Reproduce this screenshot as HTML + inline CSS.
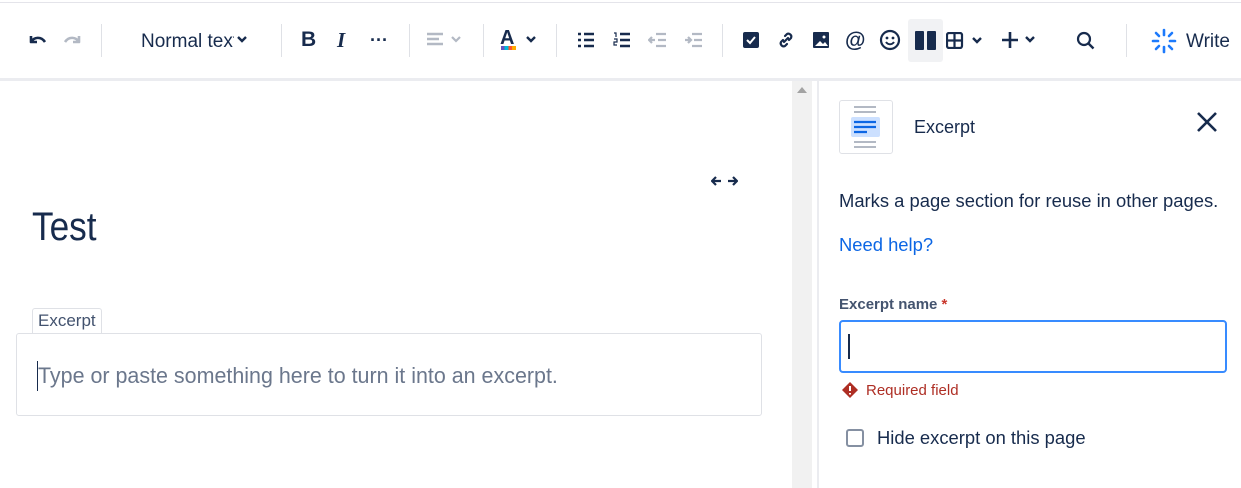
<!DOCTYPE html>
<html><head><meta charset="utf-8"><style>
*{box-sizing:border-box;margin:0;padding:0}
body{width:1241px;height:488px;overflow:hidden;background:#fff;font-family:"Liberation Sans",sans-serif;color:#172b4d;position:relative}
.a{position:absolute}
.sep{position:absolute;top:24px;width:1px;height:33px;background:#dfe1e6}
svg{position:absolute}
</style></head><body>
<div class="a" style="left:0;top:2px;width:1241px;height:1px;background:#e4e4ea"></div>
<div class="a" style="left:0;top:78px;width:1241px;height:3px;background:#ebecf0"></div>

<svg style="left:26px;top:30px" width="24" height="22" viewBox="0 0 24 22"><path d="M5 6v6h6M5 12c3-5 10-6 14 0" fill="none" stroke="#172b4d" stroke-width="2.6" stroke-linejoin="round"/></svg>
<svg style="left:60px;top:30px" width="24" height="22" viewBox="0 0 24 22"><path d="M19 6v6h-6M19 12c-3-5-10-6-14 0" fill="none" stroke="#b3b9c4" stroke-width="2.6" stroke-linejoin="round"/></svg>
<div class="sep" style="left:101px"></div>
<div class="a" style="left:141px;top:31px;font-size:19px;width:93px;overflow:hidden;white-space:nowrap">Normal text</div>
<svg style="left:236px;top:35px" width="12" height="10"><path d="M2 2l4 4 4-4" fill="none" stroke="#172b4d" stroke-width="2.4"/></svg>
<div class="sep" style="left:281px"></div>
<div class="a" style="left:301px;top:28px;font-size:21px;font-weight:bold">B</div>
<div class="a" style="left:337px;top:28px;font-size:21px;font-style:italic;font-family:'Liberation Serif';font-weight:bold">I</div>
<div class="a" style="left:370px;top:30px;font-size:18px;font-weight:bold">···</div>
<div class="sep" style="left:409px"></div>
<svg style="left:426px;top:32px" width="40" height="16"><path d="M1 2h16M1 7h12M1 12h16" stroke="#b3b9c4" stroke-width="2.4"/><path d="M26 5l4 4 4-4" fill="none" stroke="#b3b9c4" stroke-width="2.2"/></svg>
<div class="sep" style="left:483px"></div>
<div class="a" style="left:500px;top:27px;font-size:20px;font-weight:bold">A</div>
<div class="a" style="left:501px;top:46px;width:15px;height:4px;background:linear-gradient(90deg,#6554c0 0 25%,#00b8d9 25% 50%,#ff5630 50% 75%,#ffab00 75%)"></div>
<svg style="left:525px;top:35px" width="12" height="10"><path d="M2 2l4 4 4-4" fill="none" stroke="#172b4d" stroke-width="2.4"/></svg>
<div class="sep" style="left:556px"></div>
<svg style="left:577px;top:32px" width="18" height="16"><path d="M1 2h3M1 8h3M1 14h3M7 2h10M7 8h10M7 14h10" stroke="#172b4d" stroke-width="2.4"/></svg>
<svg style="left:613px;top:32px" width="18" height="16"><path d="M7 2h10M7 8h10M7 14h10" stroke="#172b4d" stroke-width="2.4"/><path d="M1 1h2v4M1 7h3v3H1v3h3" fill="none" stroke="#172b4d" stroke-width="1.2"/></svg>
<svg style="left:648px;top:32px" width="20" height="16"><path d="M8 2h10M10 8h8M8 14h10M1 8h6M4 5L1 8l3 3" fill="none" stroke="#b3b9c4" stroke-width="2.2"/></svg>
<svg style="left:684px;top:32px" width="20" height="16"><path d="M8 2h10M10 8h8M8 14h10M1 8h6M4 5l3 3-3 3" fill="none" stroke="#b3b9c4" stroke-width="2.2"/></svg>
<div class="sep" style="left:722px"></div>
<svg style="left:742px;top:31px" width="18" height="18"><rect x="1" y="1" width="16" height="16" rx="2" fill="#172b4d"/><path d="M5 9l3 3 5-6" fill="none" stroke="#fff" stroke-width="2"/></svg>
<svg style="left:776px;top:30px" width="20" height="20"><path d="M8 12l4-4M9 6l2-2a3 3 0 014 4l-2 2M11 14l-2 2a3 3 0 01-4-4l2-2" fill="none" stroke="#172b4d" stroke-width="2.2" stroke-linecap="round"/></svg>
<svg style="left:812px;top:31px" width="18" height="18"><rect x="1" y="1" width="16" height="16" rx="1" fill="#172b4d"/><path d="M3 15l5-5 3 3 2-2 3 4z" fill="#fff"/><circle cx="12" cy="6" r="1.5" fill="#fff"/></svg>
<div class="a" style="left:845px;top:29px;font-size:21px;font-weight:bold">@</div>
<svg style="left:879px;top:29px" width="22" height="22"><circle cx="11" cy="11" r="9" fill="none" stroke="#172b4d" stroke-width="2.2"/><circle cx="8" cy="9" r="1.4" fill="#172b4d"/><circle cx="14" cy="9" r="1.4" fill="#172b4d"/><path d="M7 13c2 3 6 3 8 0" fill="none" stroke="#172b4d" stroke-width="2"/></svg>
<div class="a" style="left:908px;top:19px;width:35px;height:43px;background:#f1f2f4;border-radius:3px"></div>
<svg style="left:915px;top:31px" width="22" height="19"><rect x="0" y="0" width="9" height="19" rx="1" fill="#172b4d"/><rect x="12" y="0" width="9" height="19" rx="1" fill="#172b4d"/></svg>
<svg style="left:946px;top:32px" width="40" height="17"><rect x="1" y="1" width="15" height="15" rx="2" fill="none" stroke="#172b4d" stroke-width="2.2"/><path d="M8.5 1v15M1 8.5h15" stroke="#172b4d" stroke-width="2.2"/><path d="M27 6l4 4 4-4" fill="none" stroke="#172b4d" stroke-width="2.4"/></svg>
<svg style="left:1001px;top:31px" width="40" height="18"><path d="M9 1v16M1 9h16" stroke="#172b4d" stroke-width="2.6"/><path d="M25 6l4 4 4-4" fill="none" stroke="#172b4d" stroke-width="2.4"/></svg>
<svg style="left:1076px;top:31px" width="20" height="20"><circle cx="8" cy="8" r="6" fill="none" stroke="#172b4d" stroke-width="2.2"/><path d="M12.5 12.5l5 5" stroke="#172b4d" stroke-width="2.4"/></svg>
<div class="sep" style="left:1126px"></div>
<svg style="left:1151px;top:28px" width="26" height="26" viewBox="0 0 26 26"><g stroke="#1d7afc" stroke-width="2.6" stroke-linecap="round"><path d="M13 2v5M13 19v5M2 13h5M19 13h5M5 5l3 3M18 18l3 3M21 5l-3 3M8 18l-3 3"/></g></svg>
<div class="a" style="left:1186px;top:31px;font-size:19px">Write</div>

<div class="a" style="left:792px;top:81px;width:20px;height:407px;background:#f1f1f1"></div>
<svg style="left:797px;top:87px" width="10" height="6"><path d="M0 6L5 0l5 6z" fill="#a3a3a3"/></svg>
<div class="a" style="left:817px;top:81px;width:2px;height:407px;background:#ebecf0"></div>
<svg style="left:711px;top:175px" width="27" height="12"><path d="M1 6h9M5 2L1 6l4 4M26 6h-9M22 2l4 4-4 4" fill="none" stroke="#172b4d" stroke-width="2.2"/></svg>
<div class="a" style="left:32px;top:205px;font-size:40px;transform:scaleX(.88);transform-origin:left">Test</div>
<div class="a" style="left:32px;top:308px;height:26px;border:1px solid #dfe1e6;border-bottom:none;border-radius:3px 3px 0 0;padding:2px 5px;font-size:17px;color:#42526e;background:#fff">Excerpt</div>
<div class="a" style="left:16px;top:333px;width:746px;height:83px;border:1px solid #dfe1e6;border-radius:3px"></div>
<div class="a" style="left:37px;top:361px;width:1px;height:30px;background:#172b4d"></div>
<div class="a" style="left:38px;top:363px;font-size:22px;color:#6b778c;transform:scaleX(.975);transform-origin:left;white-space:nowrap">Type or paste something here to turn it into an excerpt.</div>

<div class="a" style="left:839px;top:100px;width:54px;height:54px;border:1px solid #dfe1e6;border-radius:3px"></div>
<svg style="left:839px;top:100px" width="54" height="54"><path d="M15 7h22M15 12h22M15 42h22M15 47h22" stroke="#b3b9c4" stroke-width="2"/><rect x="12" y="17" width="29" height="20" rx="2" fill="#cce0ff"/><path d="M15 22h22M15 27h22M15 32h13" stroke="#0c66e4" stroke-width="2.2"/></svg>
<div class="a" style="left:914px;top:117px;font-size:18px">Excerpt</div>
<svg style="left:1196px;top:111px" width="22" height="22"><path d="M2 2l18 18M20 2L2 20" stroke="#172b4d" stroke-width="2.6"/></svg>
<div class="a" style="left:839px;top:190px;font-size:18.4px;white-space:nowrap">Marks a page section for reuse in other pages.</div>
<div class="a" style="left:839px;top:234px;font-size:18.4px;color:#0c66e4">Need help?</div>
<div class="a" style="left:839px;top:296px;font-size:15px;font-weight:bold;color:#44546f">Excerpt name <span style="color:#c9372c">*</span></div>
<div class="a" style="left:839px;top:320px;width:388px;height:53px;border:2px solid #388bff;border-radius:4px"></div>
<div class="a" style="left:848px;top:334px;width:1.5px;height:25px;background:#172b4d"></div>
<svg style="left:842px;top:382px" width="16" height="16"><path d="M8 0l8 8-8 8-8-8z" fill="#ae2e24"/><path d="M8 4v5M8 11v1.5" stroke="#fff" stroke-width="2"/></svg>
<div class="a" style="left:866px;top:382px;font-size:15px;color:#ae2e24">Required field</div>
<div class="a" style="left:846px;top:429px;width:18px;height:18px;border:2px solid #8590a2;border-radius:3px"></div>
<div class="a" style="left:877px;top:427px;font-size:18.4px">Hide excerpt on this page</div>
</body></html>
